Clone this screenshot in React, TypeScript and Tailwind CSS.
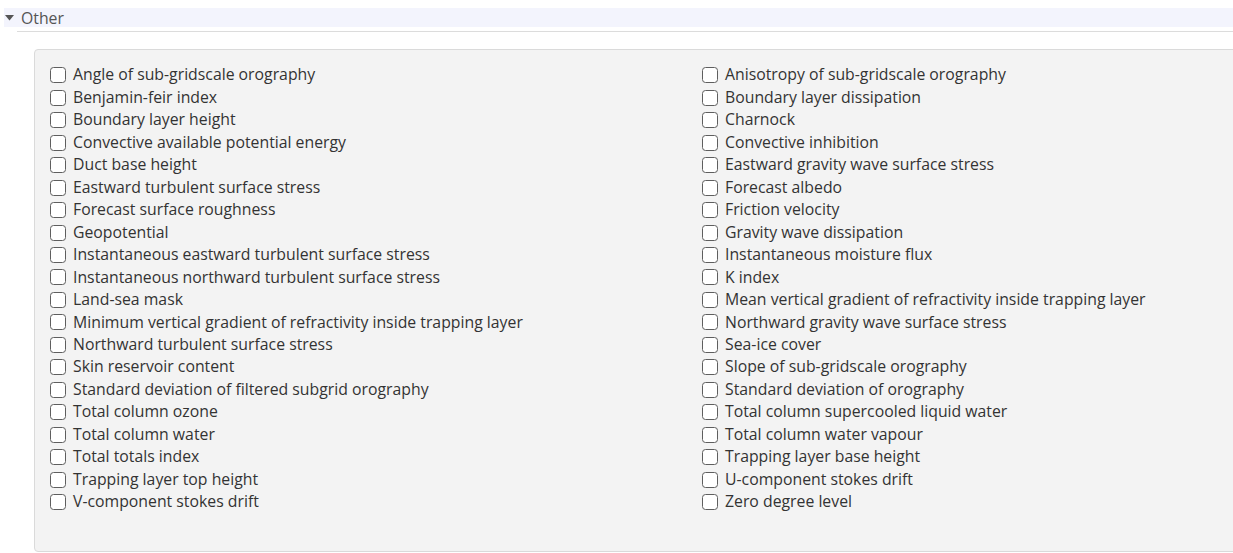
import React from "react";

const left = [
  "Angle of sub-gridscale orography",
  "Benjamin-feir index",
  "Boundary layer height",
  "Convective available potential energy",
  "Duct base height",
  "Eastward turbulent surface stress",
  "Forecast surface roughness",
  "Geopotential",
  "Instantaneous eastward turbulent surface stress",
  "Instantaneous northward turbulent surface stress",
  "Land-sea mask",
  "Minimum vertical gradient of refractivity inside trapping layer",
  "Northward turbulent surface stress",
  "Skin reservoir content",
  "Standard deviation of filtered subgrid orography",
  "Total column ozone",
  "Total column water",
  "Total totals index",
  "Trapping layer top height",
  "V-component stokes drift",
];

const right = [
  "Anisotropy of sub-gridscale orography",
  "Boundary layer dissipation",
  "Charnock",
  "Convective inhibition",
  "Eastward gravity wave surface stress",
  "Forecast albedo",
  "Friction velocity",
  "Gravity wave dissipation",
  "Instantaneous moisture flux",
  "K index",
  "Mean vertical gradient of refractivity inside trapping layer",
  "Northward gravity wave surface stress",
  "Sea-ice cover",
  "Slope of sub-gridscale orography",
  "Standard deviation of orography",
  "Total column supercooled liquid water",
  "Total column water vapour",
  "Trapping layer base height",
  "U-component stokes drift",
  "Zero degree level",
];

function Item({ label }: { label: string }) {
  return (
    <label className="flex items-center h-[22.47px] cursor-pointer">
      <span className="w-[16px] h-[16px] border-[1.5px] border-[#5e5e5e] rounded-[3.5px] bg-white shrink-0" />
      <span className="ml-[7px] whitespace-nowrap">{label}</span>
    </label>
  );
}

export default function App() {
  return (
    <div className="w-[1233px] h-[553px] overflow-hidden bg-white font-['Open_Sans',sans-serif] text-[#333]">
      <div className="pt-[8px]">
        <div className="ml-[4px] h-[19px] bg-[#f3f4fd] flex items-center">
          <svg width="10" height="6" viewBox="0 0 10 6" className="ml-[1px]">
            <path d="M0 0 L9 0 L4.5 5.5 Z" fill="#555" />
          </svg>
          <span className="ml-[6px] pt-[2px] text-[15.8px] text-[#555] leading-none">Other</span>
        </div>
        <div className="ml-[17px] mt-[4px] border-t border-[#dcdcdc]" />
      </div>
      <div className="ml-[34px] mt-[17px] h-[503px] w-[1300px] border border-[#dadada] rounded-[4px] bg-[#f3f3f3] pt-[14px] pl-[15px] text-[15.8px]">
        <div className="grid grid-cols-[652px_1fr]">
          <div className="flex flex-col">
            {left.map((l) => (
              <Item key={l} label={l} />
            ))}
          </div>
          <div className="flex flex-col">
            {right.map((l) => (
              <Item key={l} label={l} />
            ))}
          </div>
        </div>
      </div>
    </div>
  );
}
